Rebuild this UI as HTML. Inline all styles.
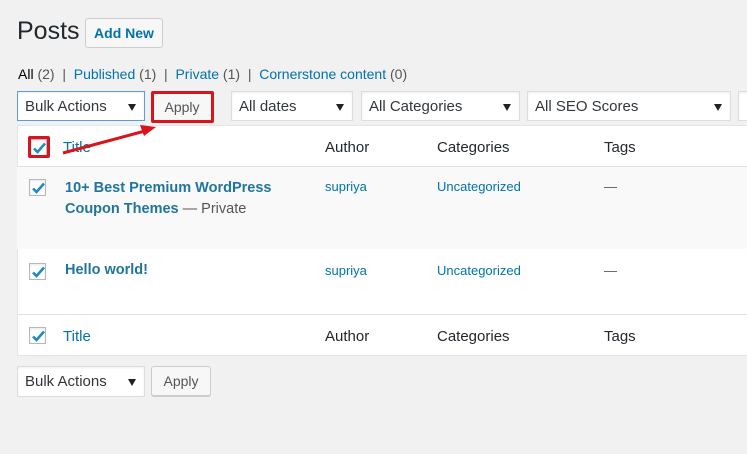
<!DOCTYPE html>
<html><head><meta charset="utf-8"><style>
*{box-sizing:border-box;margin:0;padding:0}
body{width:747px;height:454px;background:#f1f1f1;font-family:"Liberation Sans",sans-serif;color:#23282d;position:relative;overflow:hidden;font-size:14px}
.a{position:absolute}
.link{color:#0073aa}
.sel{position:absolute;background:#fff;border:1px solid #ddd;height:30px;font-size:15px;color:#32373c;padding:6px 0 0 7px;box-shadow:inset 0 1px 2px rgba(0,0,0,.07)}
.sel .tri{position:absolute;right:8px;top:12px;width:0;height:0;border-left:4px solid transparent;border-right:4px solid transparent;border-top:7px solid #222}
.btn{position:absolute;background:#f7f7f7;border:1px solid #ccc;border-radius:3px;height:30px;font-size:14px;color:#555;text-align:center;padding-top:6px;box-shadow:0 1px 0 #ccc}
.cb{position:absolute;width:17px;height:17px;border:1px solid #b4b9be;background:#fff;box-shadow:inset 0 1px 2px rgba(0,0,0,.1)}
.cb svg{position:absolute;left:0;top:0}
.row{position:absolute;left:17px;width:730px}
.t{position:absolute;font-size:15px}
</style></head><body>
<div class="a" style="left:17px;top:17px;font-size:25px;color:#23282d">Posts</div>
<div class="a" style="left:85px;top:18px;width:78px;height:30px;border:1px solid #ccc;border-radius:3px;background:#f7f7f7;color:#0073aa;font-size:14px;font-weight:bold;text-align:center;padding-top:6px">Add New</div>
<div class="a" style="left:18px;top:66px;font-size:14px;color:#555;white-space:nowrap"><span style="color:#000">All</span> (2) &nbsp;| &nbsp;<span class="link">Published</span> (1) &nbsp;| &nbsp;<span class="link">Private</span> (1) &nbsp;| &nbsp;<span class="link">Cornerstone content</span> (0)</div>

<div class="sel" style="left:17px;top:91px;width:128px;border-color:#5b9dd9">Bulk Actions<div class="tri"></div></div>
<div class="btn" style="left:152px;top:92px;width:60px">Apply</div>
<div class="a" style="left:151px;top:91px;width:63px;height:32px;border:3px solid #d8141c;border-radius:2px"></div>
<div class="sel" style="left:231px;top:91px;width:122px">All dates<div class="tri"></div></div>
<div class="sel" style="left:361px;top:91px;width:159px">All Categories<div class="tri"></div></div>
<div class="sel" style="left:527px;top:91px;width:204px">All SEO Scores<div class="tri"></div></div>
<div class="sel" style="left:738px;top:91px;width:20px"></div>

<div class="a" style="left:17px;top:125px;width:740px;height:231px;background:#fff;border:1px solid #e5e5e5"></div>
<div class="row" style="top:166px;height:1px;background:#e1e1e1"></div>
<div class="row" style="top:167px;height:82px;background:#f9f9f9"></div>
<div class="row" style="top:314px;height:1px;background:#e1e1e1"></div>

<div class="t" style="left:63px;top:139px;color:#0073aa">Title</div>
<div class="t" style="left:325px;top:139px">Author</div>
<div class="t" style="left:437px;top:139px">Categories</div>
<div class="t" style="left:604px;top:139px">Tags</div>

<div class="t" style="left:65px;top:178px;color:#21759b;font-weight:bold;font-size:14.5px;line-height:21px">10+ Best Premium WordPress<br>Coupon Themes <span style="color:#555;font-weight:normal">— Private</span></div>
<div class="t" style="left:325px;top:179px;font-size:13px;color:#0073aa">supriya</div>
<div class="t" style="left:437px;top:179px;font-size:13px;color:#0073aa">Uncategorized</div>
<div class="t" style="left:604px;top:179px;font-size:13px;color:#555">—</div>

<div class="t" style="left:65px;top:262px;color:#21759b;font-weight:bold;font-size:14.5px">Hello world!</div>
<div class="t" style="left:325px;top:263px;font-size:13px;color:#0073aa">supriya</div>
<div class="t" style="left:437px;top:263px;font-size:13px;color:#0073aa">Uncategorized</div>
<div class="t" style="left:604px;top:263px;font-size:13px;color:#555">—</div>

<div class="t" style="left:63px;top:328px;color:#0073aa">Title</div>
<div class="t" style="left:325px;top:328px">Author</div>
<div class="t" style="left:437px;top:328px">Categories</div>
<div class="t" style="left:604px;top:328px">Tags</div>

<div class="cb" style="left:30px;top:139px"><svg width="17" height="17"><path d="M3 8.5l3.5 3.5L14 3.5" stroke="#1e8cbe" stroke-width="2.6" fill="none"/></svg></div>
<div class="a" style="left:28px;top:136px;width:22px;height:22px;border:3px solid #d8141c;border-radius:2px"></div>
<div class="cb" style="left:29px;top:179px"><svg width="17" height="17"><path d="M3 8.5l3.5 3.5L14 3.5" stroke="#1e8cbe" stroke-width="2.6" fill="none"/></svg></div>
<div class="cb" style="left:29px;top:263px"><svg width="17" height="17"><path d="M3 8.5l3.5 3.5L14 3.5" stroke="#1e8cbe" stroke-width="2.6" fill="none"/></svg></div>
<div class="cb" style="left:29px;top:327px"><svg width="17" height="17"><path d="M3 8.5l3.5 3.5L14 3.5" stroke="#1e8cbe" stroke-width="2.6" fill="none"/></svg></div>

<svg class="a" style="left:0;top:0" width="747" height="454"><line x1="63" y1="153" x2="145" y2="131" stroke="#d8141c" stroke-width="3"/><polygon points="156,127 140,125 144,136" fill="#d8141c"/></svg>

<div class="sel" style="left:17px;top:366px;width:128px;height:31px">Bulk Actions<div class="tri"></div></div>
<div class="btn" style="left:151px;top:366px;width:60px">Apply</div>
</body></html>
